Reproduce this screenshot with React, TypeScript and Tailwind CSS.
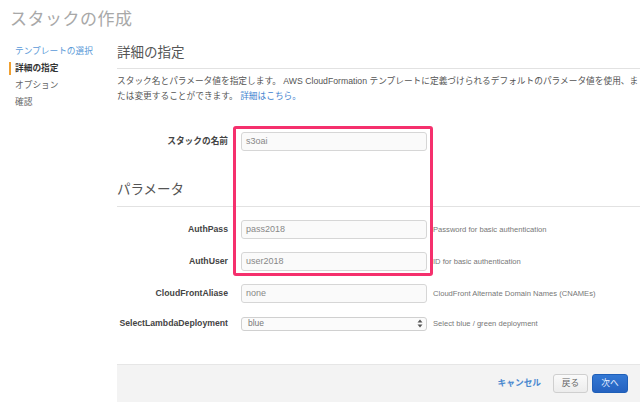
import { ReactNode } from "react"

const FONT = "font-['Liberation_Sans','Noto_Sans_CJK_JP',sans-serif]"

interface FieldRowProps {
  label: string
  help?: string
  children: ReactNode
}

function FieldRow({ label, help, children }: FieldRowProps) {
  return (
    <div className="flex h-[19px] items-center">
      <div className="w-[111px] shrink-0 text-right text-[8.7px] font-bold text-[#444]">{label}</div>
      <div className="ml-[13px] w-[186px] shrink-0">{children}</div>
      {help && <div className="ml-[6px] whitespace-nowrap text-[7.6px] text-[#777]">{help}</div>}
    </div>
  )
}

function TextBox({ value }: { value: string }) {
  return (
    <div className="flex h-[19px] items-center rounded-[3px] border border-[#d6d6d6] bg-[#fafafa] pl-[4px] text-[9px] text-[#888]">
      {value}
    </div>
  )
}

function SelectBox({ value }: { value: string }) {
  return (
    <div className="flex h-[14px] items-center justify-between rounded-[3px] border border-[#d0d0d0] bg-[#fbfbfb] pl-[6px] pr-[3px] text-[8.5px] text-[#777]">
      <span>{value}</span>
      <svg width="6" height="9" viewBox="0 0 6 9">
        <path d="M3 0.5 L5.5 3.5 H0.5 Z" fill="#555" />
        <path d="M3 8.5 L5.5 5.5 H0.5 Z" fill="#555" />
      </svg>
    </div>
  )
}

export default function App() {
  return (
    <div className={`relative h-[409px] w-[640px] overflow-hidden bg-white ${FONT}`}>
      {/* Page title */}
      <div className="flex h-[40px] items-center pl-[10px] text-[17px] tracking-[0.5px] text-[#a8a8a8]">
        スタックの作成
      </div>

      <div className="flex">
        {/* Wizard steps */}
        <nav className="w-[117px] shrink-0 pt-[3px] text-[8.7px]">
          <div className="flex h-[17px] items-center pl-[15px] text-[#5a9ad8]">テンプレートの選択</div>
          <div className="flex h-[17px] items-center">
            <span className="ml-[9px] h-[13px] w-[2px] bg-[#f0a030]" />
            <span className="ml-[4px] font-bold text-[#333]">詳細の指定</span>
          </div>
          <div className="flex h-[17px] items-center pl-[15px] text-[#666]">オプション</div>
          <div className="flex h-[17px] items-center pl-[15px] text-[#666]">確認</div>
        </nav>

        <main className="flex-1">
          <h2 className="mt-[4px] border-b border-[#e2e2e2] pb-[6px] text-[13.5px] leading-[18px] text-[#555]">
            詳細の指定
          </h2>
          <div className="mt-[5px] text-[8.7px] leading-[15px] text-[#555]">
            <div className="whitespace-nowrap">
              スタック名とパラメータ値を指定します。 AWS CloudFormation テンプレートに定義づけられるデフォルトのパラメータ値を使用、ま
            </div>
            <div className="whitespace-nowrap">
              たは変更することができます。 <span className="text-[#3f83cf]">詳細はこちら。</span>
            </div>
          </div>

          <div className="mt-[28px]">
            <FieldRow label="スタックの名前">
              <TextBox value="s3oai" />
            </FieldRow>
          </div>

          <h2 className="mt-[30px] border-b border-[#e2e2e2] pb-[7px] text-[13.5px] leading-[18px] text-[#555]">
            パラメータ
          </h2>

          <div className="mt-[13px] flex flex-col gap-[13px]">
            <FieldRow label="AuthPass" help="Password for basic authentication">
              <TextBox value="pass2018" />
            </FieldRow>
            <FieldRow label="AuthUser" help="ID for basic authentication">
              <TextBox value="user2018" />
            </FieldRow>
            <FieldRow label="CloudFrontAliase" help="CloudFront Alternate Domain Names (CNAMEs)">
              <TextBox value="none" />
            </FieldRow>
          </div>
          <div className="mt-[11px]">
            <FieldRow label="SelectLambdaDeployment" help="Select blue / green deployment">
              <SelectBox value="blue" />
            </FieldRow>
          </div>

          {/* Footer actions */}
          <div className="mt-[31px] flex h-[38px] items-center justify-end border-t border-[#e6e6e6] bg-[#f3f3f3] pr-[12px]">
            <span className="text-[8.7px] font-bold text-[#4a88cf]">キャンセル</span>
            <button
              type="button"
              className="ml-[12px] h-[19px] w-[35px] rounded-[3px] border border-[#cfcfcf] bg-gradient-to-b from-[#fafafa] to-[#ececec] text-[8.7px] text-[#666]"
            >
              戻る
            </button>
            <button
              type="button"
              className="ml-[4px] h-[19px] w-[36px] rounded-[3px] border border-[#1f5fb8] bg-gradient-to-b from-[#3378d4] to-[#2562c0] text-[8.7px] text-[#e8f0ff]"
            >
              次へ
            </button>
          </div>
        </main>
      </div>

      {/* Highlight annotation */}
      <div className="pointer-events-none absolute left-[233px] top-[126px] h-[150px] w-[200px] rounded-[3px] border-[3px] border-[#f5306d]" />
    </div>
  )
}
